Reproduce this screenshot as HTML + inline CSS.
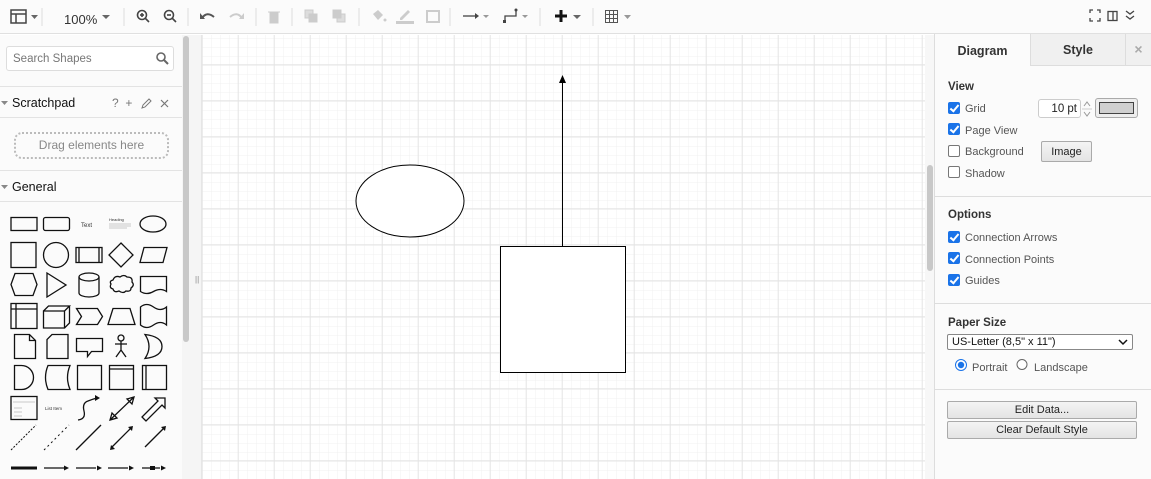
<!DOCTYPE html>
<html><head><meta charset="utf-8"><style>
*{box-sizing:border-box;margin:0;padding:0}
body{width:1151px;height:479px;overflow:hidden;background:#fff;font-family:"Liberation Sans",sans-serif;font-size:12px;color:#333;position:relative}
.abs{position:absolute}
.cb{position:absolute;width:12px;height:12px;border-radius:2px}
.on{background:#1a73e8}
.on::after{content:"";position:absolute;left:4px;top:1px;width:3px;height:7px;border:solid #fff;border-width:0 2px 2px 0;transform:rotate(40deg)}
.off{border:1px solid #777;background:#fff}
.lbl{position:absolute;font-size:11px;color:#555}
.btn{position:absolute;border:1px solid #aaa;border-radius:2px;background:linear-gradient(#f4f4f4,#e4e4e4);font-size:11px;color:#222;text-align:center}
</style></head><body>
<div class="abs" style="left:0;top:0;width:1151px;height:34px;background:#fbfbfb;border-bottom:1px solid #e0e0e0"></div>
<svg class="abs" style="left:0;top:0" width="1151" height="34">
<g fill="none" stroke="#444" stroke-width="1.5"><rect x="11" y="10" width="15" height="13"/><line x1="11" y1="14" x2="26" y2="14"/><line x1="16" y1="14" x2="16" y2="23"/></g>
<path d="M31 15h7l-3.5 4z" fill="#666"/>
<line x1="42" y1="8" x2="42" y2="26" stroke="#ddd"/>
<text x="64" y="24" font-size="13" fill="#333" font-family="Liberation Sans">100%</text>
<path d="M102 15h8l-4 4z" fill="#666"/>
<line x1="124" y1="8" x2="124" y2="26" stroke="#ddd"/>
<g fill="none" stroke="#444" stroke-width="1.6"><circle cx="142" cy="15" r="4.5"/><line x1="145" y1="18" x2="149" y2="22"/><line x1="140" y1="15" x2="144" y2="15"/><line x1="142" y1="13" x2="142" y2="17"/>
<circle cx="169" cy="15" r="4.5"/><line x1="172" y1="18" x2="176" y2="22"/><line x1="167" y1="15" x2="171" y2="15"/></g>
<line x1="188" y1="8" x2="188" y2="26" stroke="#ddd"/>
<path d="M202 18q5-7 12-1" fill="none" stroke="#555" stroke-width="2"/><path d="M200 13v6h5z" fill="#555"/>
<path d="M242 18q-5-7-12-1" fill="none" stroke="#ccc" stroke-width="2"/><path d="M244 13v6h-5z" fill="#ccc"/>
<line x1="256" y1="8" x2="256" y2="26" stroke="#ddd"/>
<path d="M268 12h12M270 13h8v10h-8z" fill="#ccc" stroke="#ccc"/>
<line x1="292" y1="8" x2="292" y2="26" stroke="#ddd"/>
<g fill="#ddd" stroke="#ccc"><rect x="305" y="10" width="8" height="8"/><rect x="309" y="14" width="8" height="8" fill="#ccc"/><rect x="337" y="14" width="8" height="8"/><rect x="333" y="10" width="8" height="8" fill="#ccc"/></g>
<line x1="359" y1="8" x2="359" y2="26" stroke="#ddd"/>
<path d="M373 14l5-4 5 5-5 5z" fill="#ccc"/><circle cx="385" cy="20" r="1.5" fill="#ccc"/>
<path d="M400 18l8-8 2 2-8 8h-2z" fill="#ccc"/><rect x="396" y="21" width="18" height="3" fill="#ccc"/>
<rect x="427" y="11" width="12" height="11" fill="none" stroke="#ccc" stroke-width="2"/>
<line x1="450" y1="8" x2="450" y2="26" stroke="#ddd"/>
<line x1="463" y1="16" x2="476" y2="16" stroke="#444" stroke-width="1.3"/><path d="M475 13l4 3-4 3z" fill="#444"/><path d="M483 15h6l-3 3z" fill="#999"/>
<path d="M505 22v-6h11v-6" fill="none" stroke="#444" stroke-width="1.3"/><rect x="503" y="20" width="3" height="3" fill="#444"/><circle cx="516" cy="10" r="1.5" fill="#444"/><path d="M522 15h6l-3 3z" fill="#999"/>
<line x1="540" y1="8" x2="540" y2="26" stroke="#ddd"/>
<path d="M561 10v12M555 16h12" stroke="#111" stroke-width="3"/><path d="M573 15h8l-4 4z" fill="#666"/>
<line x1="593" y1="8" x2="593" y2="26" stroke="#ddd"/>
<g fill="none" stroke="#555"><rect x="605.5" y="10.5" width="12" height="12"/><path d="M609.5 10.5v12M613.5 10.5v12M605.5 14.5h12M605.5 18.5h12"/></g><path d="M624 15h7l-3.5 4z" fill="#999"/>
<g fill="none" stroke="#444" stroke-width="1.3"><path d="M1090 13v-3h3M1097 10h3v3M1100 18v3h-3M1093 21h-3v-3"/><rect x="1108" y="11.5" width="9" height="9"/><line x1="1113" y1="11.5" x2="1113" y2="20.5"/><path d="M1126 11l4 3 4-3M1126 16l4 3 4-3"/></g>
</svg>
<div class="abs" style="left:0;top:35px;width:182px;height:444px;background:#fbfbfb"></div>
<div class="abs" style="left:182px;top:35px;width:20px;height:444px;background:#f5f5f5;border-right:1px solid #e6e6e6"></div>
<div class="abs" style="left:183px;top:36px;width:6px;height:306px;background:#c8c8c8;border-radius:3px"></div>
<div class="abs" style="left:195px;top:275px;font-size:8px;color:#888">||</div>
<div class="abs" style="left:6px;top:46px;width:168px;height:25px;border:1px solid #ddd;border-radius:3px;background:#fff;padding:6px 6px;font-size:11.5px;color:#777">Search Shapes</div>
<svg class="abs" style="left:155px;top:51px" width="14" height="14"><circle cx="6" cy="6" r="4" fill="none" stroke="#666" stroke-width="1.6"/><line x1="9" y1="9" x2="13" y2="13" stroke="#666" stroke-width="2"/></svg>
<div class="abs" style="left:0;top:86px;width:182px;border-top:1px solid #e3e3e3"></div>
<div class="abs" style="left:0;top:117px;width:182px;border-top:1px solid #e3e3e3"></div>
<div class="abs" style="left:0;top:170px;width:182px;border-top:1px solid #e3e3e3"></div>
<div class="abs" style="left:0;top:201px;width:182px;border-top:1px solid #e3e3e3"></div>
<svg class="abs" style="left:0;top:98px" width="10" height="10"><path d="M1 3h7l-3.5 4z" fill="#888"/></svg>
<div class="abs" style="left:12px;top:96px;font-size:12.5px;color:#111">Scratchpad</div>
<div class="abs" style="left:112px;top:96px;font-size:12px;color:#777">?&nbsp;&nbsp;+&nbsp;&nbsp;</div>
<svg class="abs" style="left:141px;top:98px" width="30" height="12"><path d="M1 10l1-3 6-6 2 2-6 6z" fill="none" stroke="#777"/><path d="M20 2l7 7M27 2l-7 7" stroke="#777" stroke-width="1.2"/></svg>
<div class="abs" style="left:14px;top:132px;width:155px;height:27px;border:2px dotted #bbb;border-radius:8px;text-align:center;line-height:23px;color:#888;font-size:12px">Drag elements here</div>
<svg class="abs" style="left:0;top:182px" width="10" height="10"><path d="M1 3h7l-3.5 4z" fill="#888"/></svg>
<div class="abs" style="left:12px;top:180px;font-size:12.5px;color:#111">General</div>
<svg class="abs" style="left:0;top:0" width="182" height="479" font-family="Liberation Sans">
<g fill="none" stroke="#111" stroke-width="1.3">
<rect x="11" y="217.5" width="26" height="13"/><rect x="43.5" y="217.5" width="26" height="13" rx="2"/><ellipse cx="153" cy="224" rx="13" ry="8"/>
<rect x="11" y="242.5" width="25" height="25"/><circle cx="56" cy="255" r="12.5"/><rect x="76" y="247.5" width="26" height="15"/><path d="M79 247.5v15M99 247.5v15"/><path d="M121 243l12 12-12 12-12-12z"/><path d="M144 247.5h23l-4 15h-23z"/>
<path d="M15 273.5h18l4 11-4 11h-18l-4-11z"/><path d="M47 273v24l19-12z"/><path d="M79 277v16a10 4 0 0 0 20 0v-16"/><ellipse cx="89" cy="277" rx="10" ry="4"/><path d="M113 280q2-5 7-3q4-3 7 0q6 0 5 5q3 3-1 6q0 4-5 3q-3 3-7 0q-5 2-6-2q-4-1-2-5q-2-3 2-4z"/><path d="M140.5 276.5h26v15q-6-4-13 0t-13 0z"/>
<rect x="11" y="303.5" width="26" height="25"/><path d="M16 303.5v25M11 309h26"/><path d="M43.5 311h21v17h-21zM43.5 311l5-5h21l-5 5M69.5 306v17l-5 5"/><path d="M76.5 308.5h21l5 8-5 8h-21l5-8z"/><path d="M113 308.5h17l5 16h-27z"/><path d="M140.5 307q6-5 13 0t13 0v18q-6-5-13 0t-13 0z"/>
<path d="M14.5 334.5h15l6 6v18h-21z"/><path d="M29.5 334.5v6h6"/><path d="M52 334.5h16v24h-21v-19z"/><path d="M76.5 338.5h26v13h-11l-4 5v-5h-11z"/><circle cx="121" cy="338" r="3"/><path d="M121 341v9M115 344h12M121 350l-5 7M121 350l5 7"/><path d="M145 334.5q17 2 17 12t-17 12q8-12 0-24z"/>
<path d="M14.5 365.5h7a12 12 0 0 1 0 24h-7z"/><path d="M48 365.5h22q-5 12 0 24h-22q-5-12 0-24z"/><rect x="77.5" y="365.5" width="24" height="24"/><rect x="109.5" y="365.5" width="24" height="24"/><path d="M109.5 369h24"/><rect x="142.5" y="365.5" width="24" height="24"/><path d="M146 365.5v24"/>
<rect x="11" y="396.5" width="26" height="23"/><path d="M78 420q8-1 6-9t4-10q5-2 9-3"/><path d="M110 420l24-23M112 413l-2 7 7-2zM132 404l2-7-7 2z"/><path d="M145 420l-3-3 16-16-3-3h10v10l-3-3-16 16z"/>
<path d="M11 450l25-25" stroke-dasharray="2 1.5" stroke-width="1"/><path d="M44 450l25-25" stroke-dasharray="2 3" stroke-width="1"/><path d="M76 450l25-25"/><path d="M112 447l19-19"/><path d="M145 447l19-19"/>
<path d="M11 468h26" stroke-width="3"/><path d="M44 468h20M76 468h20M108 468h20M142 468h18"/>
</g>
<g fill="#111"><path d="M100 398l-5-3v6z"/><path d="M110 450l5-1-4-4zM133 426l-5 1 4 4z"/><path d="M166 426l-5 1 4 4z"/><path d="M69 468l-5-2.5v5z"/><path d="M102 468l-5-2.5v5z"/><path d="M134 468l-5-2.5v5z"/><path d="M166 468l-5-2.5v5z"/><rect x="150" y="466" width="5" height="4"/></g>
<text x="81" y="227" font-size="6" fill="#333">Text</text>
<text x="109" y="221" font-size="4" fill="#333">Heading</text>
<g stroke="#999" stroke-width=".6"><path d="M109 224h22M109 226h22M109 228h18"/><path d="M13 402h22M14 408h8M14 412h8M14 416h8"/></g>
<text x="45" y="410" font-size="4.5" fill="#333">List Item</text>
</svg>
<svg class="abs" style="left:202px;top:35px" width="723" height="444">
<defs>
<pattern id="mi" x="0" y="3.3" width="9" height="9" patternUnits="userSpaceOnUse"><path d="M0 0h9M0 0v9" fill="none" stroke="#f1f1f1" stroke-width="1"/></pattern>
<pattern id="ma" x="-0.3" y="-6.7" width="36" height="36" patternUnits="userSpaceOnUse"><path d="M0 0.5h36M0.5 0v36" fill="none" stroke="#e4e4e4" stroke-width="1"/></pattern>
</defs>
<rect width="723" height="444" fill="#fff"/>
<rect width="723" height="444" fill="url(#mi)"/>
<rect width="723" height="444" fill="url(#ma)"/>
<ellipse cx="208" cy="166" rx="54" ry="36" fill="#fff" stroke="#000" stroke-width="1"/>
<rect x="298.5" y="211.5" width="125" height="126" fill="#fff" stroke="#000"/>
<line x1="360.5" y1="211" x2="360.5" y2="46" stroke="#000"/>
<path d="M360.5 40l-3.5 8h7z" fill="#000"/>
</svg>
<div class="abs" style="left:925px;top:35px;width:9px;height:444px;background:#f7f7f7"></div>
<div class="abs" style="left:927px;top:165px;width:6px;height:106px;background:#c8c8c8;border-radius:3px"></div>
<div class="abs" style="left:934px;top:34px;width:217px;height:445px;background:#fbfbfb;border-left:1px solid #ddd"></div>
<div class="abs" style="left:1030px;top:34px;width:95px;height:32px;background:#f0f0f0;border-left:1px solid #ddd;border-bottom:1px solid #ddd;text-align:center;line-height:32px;font-weight:bold;font-size:12.5px;color:#333">Style</div>
<div class="abs" style="left:1125px;top:34px;width:26px;height:32px;background:#f0f0f0;border-left:1px solid #ddd;border-bottom:1px solid #ddd;text-align:center;line-height:30px;font-size:14px;color:#aaa;font-weight:bold">×</div>
<div class="abs" style="left:935px;top:35px;width:95px;height:32px;text-align:center;line-height:32px;font-weight:bold;font-size:12.5px;color:#333">Diagram</div>
<div class="abs" style="left:948px;top:81px;font-weight:bold;font-size:11.5px;color:#333">View</div>
<div class="cb on" style="left:948px;top:102px"></div><div class="lbl" style="left:965px;top:103px">Grid</div>
<div class="cb on" style="left:948px;top:123px"></div><div class="lbl" style="left:965px;top:125px">Page View</div>
<div class="cb off" style="left:948px;top:145px"></div><div class="lbl" style="left:965px;top:146px">Background</div>
<div class="cb off" style="left:948px;top:166px"></div><div class="lbl" style="left:965px;top:168px">Shadow</div>
<div class="abs" style="left:1038px;top:99px;width:43px;height:19px;border:1px solid #ccc;border-radius:3px;background:#fff;font-size:11.5px;text-align:right;padding:3px 3px 0;color:#222">10 pt</div>
<svg class="abs" style="left:1081px;top:99px" width="12" height="20"><path d="M3 7l3-4 3 4M3 13l3 4 3-4" fill="none" stroke="#999"/><line x1="1" y1="10" x2="11" y2="10" stroke="#ccc"/></svg>
<div class="abs" style="left:1095px;top:98px;width:43px;height:20px;border:1px solid #aaa;border-radius:3px;background:#eee;padding:3px"><div style="width:100%;height:100%;background:#d0d0d0;border:1px solid #444"></div></div>
<div class="btn" style="left:1041px;top:141px;width:51px;height:21px;line-height:20px">Image</div>
<div class="abs" style="left:935px;top:196px;width:216px;border-top:1px solid #ddd"></div>
<div class="abs" style="left:948px;top:209px;font-weight:bold;font-size:11.5px;color:#333">Options</div>
<div class="cb on" style="left:948px;top:231px"></div><div class="lbl" style="left:965px;top:232px">Connection Arrows</div>
<div class="cb on" style="left:948px;top:252px"></div><div class="lbl" style="left:965px;top:254px">Connection Points</div>
<div class="cb on" style="left:948px;top:274px"></div><div class="lbl" style="left:965px;top:275px">Guides</div>
<div class="abs" style="left:935px;top:303px;width:216px;border-top:1px solid #ddd"></div>
<div class="abs" style="left:948px;top:317px;font-weight:bold;font-size:11.5px;color:#333">Paper Size</div>
<div class="abs" style="left:947px;top:334px;width:186px;height:16px;border:1px solid #888;border-radius:2px;background:#fff;font-size:11px;padding:1px 4px;color:#111">US-Letter (8,5" x 11")</div>
<svg class="abs" style="left:1118px;top:338px" width="10" height="8"><path d="M1 2l4 4 4-4" fill="none" stroke="#111" stroke-width="1.5"/></svg>
<svg class="abs" style="left:954px;top:358px" width="80" height="14"><circle cx="7" cy="7" r="5.5" fill="#fff" stroke="#1a73e8"/><circle cx="7" cy="7" r="3.2" fill="#1a73e8"/><circle cx="68" cy="6.5" r="5" fill="#fff" stroke="#666"/></svg>
<div class="lbl" style="left:972px;top:362px">Portrait</div>
<div class="lbl" style="left:1034px;top:362px">Landscape</div>
<div class="abs" style="left:935px;top:389px;width:216px;border-top:1px solid #ddd"></div>
<div class="btn" style="left:947px;top:401px;width:190px;height:18px;line-height:17px">Edit Data...</div>
<div class="btn" style="left:947px;top:421px;width:190px;height:18px;line-height:17px">Clear Default Style</div>
</body></html>
